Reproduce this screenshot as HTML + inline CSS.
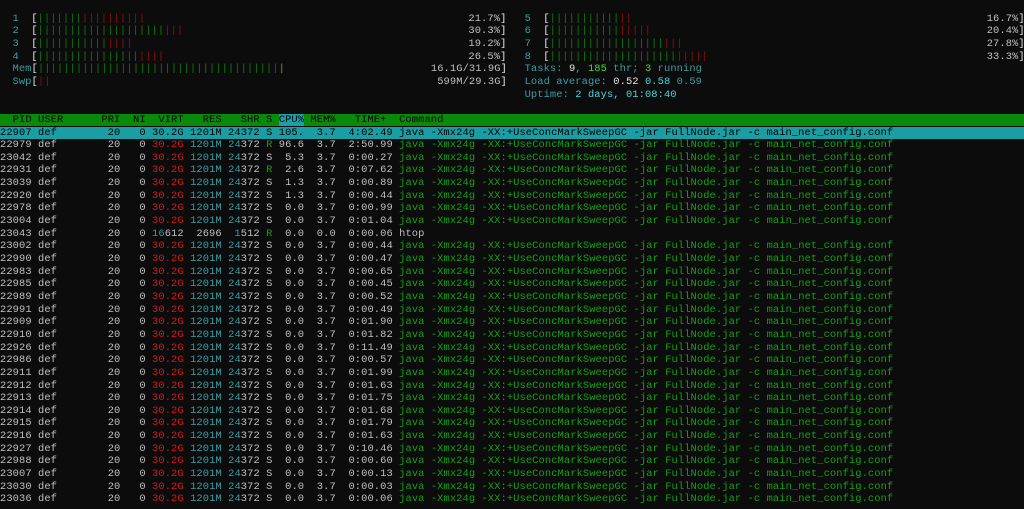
<!DOCTYPE html>
<html><head><meta charset="utf-8"><style>
body{margin:0;background:#0c0c0c;width:1024px;height:509px;overflow:hidden;position:relative;font-family:"Liberation Mono",monospace;font-size:10.41px;letter-spacing:0.09px;color:#c0c0c0}
.L{position:absolute;left:0;width:1024px;height:12.65px;line-height:12.65px;white-space:pre}
.L i{position:absolute;font-style:normal;top:0}
r{color:#d41a1a}c{color:#3a9ea5}g{color:#16a016}
b{font-weight:normal;color:#e8e8e8}
.gb{color:#107a10}.rb{color:#901010}.bb{color:#2a3ad0}.yb{color:#a08a10}
.bc{color:#4ad6e0}.bg{color:#3ce03c}
</style></head><body>
<div class="L" style="top:12.65px"><i style="left:12.5px"><c>1</c></i><i style="left:31.2px"><b>[</b><span class="gb">|||||||</span><span class="rb">||||||||||</span></i><i style="left:468.4px">21.7%<b>]</b></i><i style="left:524.6px"><c>5</c></i><i style="left:543.3px"><b>[</b><span class="gb">|||||||||||</span><span class="rb">||</span></i><i style="left:986.7px">16.7%<b>]</b></i></div>
<div class="L" style="top:25.3px"><i style="left:12.5px"><c>2</c></i><i style="left:31.2px"><b>[</b><span class="gb">||||||||||||||||||||</span><span class="rb">|||</span></i><i style="left:468.4px">30.3%<b>]</b></i><i style="left:524.6px"><c>6</c></i><i style="left:543.3px"><b>[</b><span class="gb">|||||||||||</span><span class="rb">|||||</span></i><i style="left:986.7px">20.4%<b>]</b></i></div>
<div class="L" style="top:37.95px"><i style="left:12.5px"><c>3</c></i><i style="left:31.2px"><b>[</b><span class="gb">|||||||||||</span><span class="rb">||||</span></i><i style="left:468.4px">19.2%<b>]</b></i><i style="left:524.6px"><c>7</c></i><i style="left:543.3px"><b>[</b><span class="gb">||||||||||||||||||</span><span class="rb">|||</span></i><i style="left:986.7px">27.8%<b>]</b></i></div>
<div class="L" style="top:50.6px"><i style="left:12.5px"><c>4</c></i><i style="left:31.2px"><b>[</b><span class="gb">||||||||||||||||</span><span class="rb">||||</span></i><i style="left:468.4px">26.5%<b>]</b></i><i style="left:524.6px"><c>8</c></i><i style="left:543.3px"><b>[</b><span class="gb">||||||||||||||||||||</span><span class="rb">|||||</span></i><i style="left:986.7px">33.3%<b>]</b></i></div>
<div class="L" style="top:63.25px"><i style="left:12.5px"><c>Mem</c><b>[</b><span class="gb">|||||||||||||||||||||||||||||||||||||</span><span class="bb">|</span><span class="yb">|</span></i><i style="left:430.9px">16.1G/31.9G<b>]</b></i><i style="left:524.6px"><c>Tasks: </c><b>9</b><c>, </c><span class="bg">185</span><c> thr; </c><span class="bg">3</span><c> running</c></i></div>
<div class="L" style="top:75.9px"><i style="left:12.5px"><c>Swp</c><b>[</b><span class="rb">||</span></i><i style="left:437.2px">599M/29.3G<b>]</b></i><i style="left:524.6px"><c>Load average: </c><b>0.52</b> <span class="bc">0.58</span> <c>0.59</c></i></div>
<div class="L" style="top:88.55px"><i style="left:524.6px"><c>Uptime: </c><span class="bc">2 days, 01:08:40</span></i></div>
<div class="L" style="top:113.85px;background:#0a8a0a;color:#000">  PID USER      PRI  NI  VIRT   RES   SHR S <span style="background:#1aa0a8">CPU%</span> MEM%   TIME+  Command</div>
<div class="L" style="top:126.5px;background:#1a9ea3;color:#000">22907 def        20   0 30.2G 1201M 24372 S 105.  3.7  4:02.49 java -Xmx24g -XX:+UseConcMarkSweepGC -jar FullNode.jar -c main_net_config.conf</div>
<div class="L" style="top:139.15px">22979 def        20   0 <r>30.2G</r> <c>1201M</c> <c>24</c>372 <g>R</g> 96.6  3.7  2:50.99 <g>java -Xmx24g -XX:+UseConcMarkSweepGC -jar FullNode.jar -c main_net_config.conf</g></div>
<div class="L" style="top:151.8px">23042 def        20   0 <r>30.2G</r> <c>1201M</c> <c>24</c>372 S  5.3  3.7  0:00.27 <g>java -Xmx24g -XX:+UseConcMarkSweepGC -jar FullNode.jar -c main_net_config.conf</g></div>
<div class="L" style="top:164.45px">22931 def        20   0 <r>30.2G</r> <c>1201M</c> <c>24</c>372 <g>R</g>  2.6  3.7  0:07.62 <g>java -Xmx24g -XX:+UseConcMarkSweepGC -jar FullNode.jar -c main_net_config.conf</g></div>
<div class="L" style="top:177.1px">23039 def        20   0 <r>30.2G</r> <c>1201M</c> <c>24</c>372 S  1.3  3.7  0:00.89 <g>java -Xmx24g -XX:+UseConcMarkSweepGC -jar FullNode.jar -c main_net_config.conf</g></div>
<div class="L" style="top:189.75px">22920 def        20   0 <r>30.2G</r> <c>1201M</c> <c>24</c>372 S  1.3  3.7  0:00.44 <g>java -Xmx24g -XX:+UseConcMarkSweepGC -jar FullNode.jar -c main_net_config.conf</g></div>
<div class="L" style="top:202.4px">22978 def        20   0 <r>30.2G</r> <c>1201M</c> <c>24</c>372 S  0.0  3.7  0:00.99 <g>java -Xmx24g -XX:+UseConcMarkSweepGC -jar FullNode.jar -c main_net_config.conf</g></div>
<div class="L" style="top:215.05px">23004 def        20   0 <r>30.2G</r> <c>1201M</c> <c>24</c>372 S  0.0  3.7  0:01.04 <g>java -Xmx24g -XX:+UseConcMarkSweepGC -jar FullNode.jar -c main_net_config.conf</g></div>
<div class="L" style="top:227.7px">23043 def        20   0 <c>16</c>612  2696  <c>1</c>512 <g>R</g>  0.0  0.0  0:00.06 htop</div>
<div class="L" style="top:240.35px">23002 def        20   0 <r>30.2G</r> <c>1201M</c> <c>24</c>372 S  0.0  3.7  0:00.44 <g>java -Xmx24g -XX:+UseConcMarkSweepGC -jar FullNode.jar -c main_net_config.conf</g></div>
<div class="L" style="top:253px">22990 def        20   0 <r>30.2G</r> <c>1201M</c> <c>24</c>372 S  0.0  3.7  0:00.47 <g>java -Xmx24g -XX:+UseConcMarkSweepGC -jar FullNode.jar -c main_net_config.conf</g></div>
<div class="L" style="top:265.65px">22983 def        20   0 <r>30.2G</r> <c>1201M</c> <c>24</c>372 S  0.0  3.7  0:00.65 <g>java -Xmx24g -XX:+UseConcMarkSweepGC -jar FullNode.jar -c main_net_config.conf</g></div>
<div class="L" style="top:278.3px">22985 def        20   0 <r>30.2G</r> <c>1201M</c> <c>24</c>372 S  0.0  3.7  0:00.45 <g>java -Xmx24g -XX:+UseConcMarkSweepGC -jar FullNode.jar -c main_net_config.conf</g></div>
<div class="L" style="top:290.95px">22989 def        20   0 <r>30.2G</r> <c>1201M</c> <c>24</c>372 S  0.0  3.7  0:00.52 <g>java -Xmx24g -XX:+UseConcMarkSweepGC -jar FullNode.jar -c main_net_config.conf</g></div>
<div class="L" style="top:303.6px">22991 def        20   0 <r>30.2G</r> <c>1201M</c> <c>24</c>372 S  0.0  3.7  0:00.49 <g>java -Xmx24g -XX:+UseConcMarkSweepGC -jar FullNode.jar -c main_net_config.conf</g></div>
<div class="L" style="top:316.25px">22909 def        20   0 <r>30.2G</r> <c>1201M</c> <c>24</c>372 S  0.0  3.7  0:01.90 <g>java -Xmx24g -XX:+UseConcMarkSweepGC -jar FullNode.jar -c main_net_config.conf</g></div>
<div class="L" style="top:328.9px">22910 def        20   0 <r>30.2G</r> <c>1201M</c> <c>24</c>372 S  0.0  3.7  0:01.82 <g>java -Xmx24g -XX:+UseConcMarkSweepGC -jar FullNode.jar -c main_net_config.conf</g></div>
<div class="L" style="top:341.55px">22926 def        20   0 <r>30.2G</r> <c>1201M</c> <c>24</c>372 S  0.0  3.7  0:11.49 <g>java -Xmx24g -XX:+UseConcMarkSweepGC -jar FullNode.jar -c main_net_config.conf</g></div>
<div class="L" style="top:354.2px">22986 def        20   0 <r>30.2G</r> <c>1201M</c> <c>24</c>372 S  0.0  3.7  0:00.57 <g>java -Xmx24g -XX:+UseConcMarkSweepGC -jar FullNode.jar -c main_net_config.conf</g></div>
<div class="L" style="top:366.85px">22911 def        20   0 <r>30.2G</r> <c>1201M</c> <c>24</c>372 S  0.0  3.7  0:01.99 <g>java -Xmx24g -XX:+UseConcMarkSweepGC -jar FullNode.jar -c main_net_config.conf</g></div>
<div class="L" style="top:379.5px">22912 def        20   0 <r>30.2G</r> <c>1201M</c> <c>24</c>372 S  0.0  3.7  0:01.63 <g>java -Xmx24g -XX:+UseConcMarkSweepGC -jar FullNode.jar -c main_net_config.conf</g></div>
<div class="L" style="top:392.15px">22913 def        20   0 <r>30.2G</r> <c>1201M</c> <c>24</c>372 S  0.0  3.7  0:01.75 <g>java -Xmx24g -XX:+UseConcMarkSweepGC -jar FullNode.jar -c main_net_config.conf</g></div>
<div class="L" style="top:404.8px">22914 def        20   0 <r>30.2G</r> <c>1201M</c> <c>24</c>372 S  0.0  3.7  0:01.68 <g>java -Xmx24g -XX:+UseConcMarkSweepGC -jar FullNode.jar -c main_net_config.conf</g></div>
<div class="L" style="top:417.45px">22915 def        20   0 <r>30.2G</r> <c>1201M</c> <c>24</c>372 S  0.0  3.7  0:01.79 <g>java -Xmx24g -XX:+UseConcMarkSweepGC -jar FullNode.jar -c main_net_config.conf</g></div>
<div class="L" style="top:430.1px">22916 def        20   0 <r>30.2G</r> <c>1201M</c> <c>24</c>372 S  0.0  3.7  0:01.63 <g>java -Xmx24g -XX:+UseConcMarkSweepGC -jar FullNode.jar -c main_net_config.conf</g></div>
<div class="L" style="top:442.75px">22927 def        20   0 <r>30.2G</r> <c>1201M</c> <c>24</c>372 S  0.0  3.7  0:10.46 <g>java -Xmx24g -XX:+UseConcMarkSweepGC -jar FullNode.jar -c main_net_config.conf</g></div>
<div class="L" style="top:455.4px">22988 def        20   0 <r>30.2G</r> <c>1201M</c> <c>24</c>372 S  0.0  3.7  0:00.60 <g>java -Xmx24g -XX:+UseConcMarkSweepGC -jar FullNode.jar -c main_net_config.conf</g></div>
<div class="L" style="top:468.05px">23007 def        20   0 <r>30.2G</r> <c>1201M</c> <c>24</c>372 S  0.0  3.7  0:00.13 <g>java -Xmx24g -XX:+UseConcMarkSweepGC -jar FullNode.jar -c main_net_config.conf</g></div>
<div class="L" style="top:480.7px">23030 def        20   0 <r>30.2G</r> <c>1201M</c> <c>24</c>372 S  0.0  3.7  0:00.03 <g>java -Xmx24g -XX:+UseConcMarkSweepGC -jar FullNode.jar -c main_net_config.conf</g></div>
<div class="L" style="top:493.35px">23036 def        20   0 <r>30.2G</r> <c>1201M</c> <c>24</c>372 S  0.0  3.7  0:00.06 <g>java -Xmx24g -XX:+UseConcMarkSweepGC -jar FullNode.jar -c main_net_config.conf</g></div>
</body></html>
